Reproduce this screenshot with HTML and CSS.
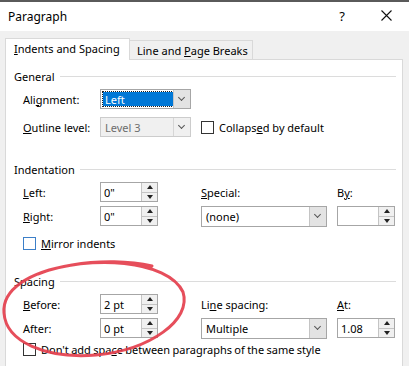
FILE: index.html
```html
<!DOCTYPE html>
<html lang="en">
<head>
    <meta charset="UTF-8">
    <title>Paragraph</title>
    <link rel="stylesheet" href="styles.css">
</head>
<body>
    <div class="window">
        <div class="topline"></div>
        <div class="titlebar">
            <span class="title">Paragraph</span>
            <span class="help">?</span>
            <svg class="close" width="11" height="11" viewBox="0 0 11 11">
                <path d="M0.5 0.5 L10.5 10.5 M10.5 0.5 L0.5 10.5" stroke="#111" stroke-width="1.1" fill="none"/>
            </svg>
        </div>

        <div class="dialog">
            <div class="tabs">
                <div class="tab active"><span><u>I</u>ndents and Spacing</span></div>
                <div class="tab"><span>Line and <u>P</u>age Breaks</span></div>
            </div>

            <div class="panel">
                <div class="group-head"><span>General</span><i></i></div>
                <div class="grid general">
                    <label>Ali<u>g</u>nment:</label>
                    <div class="select">
                        <span class="value"><span class="picked">Left</span></span>
                        <span class="drop"></span>
                    </div>
                    <span></span>
                    <span></span>

                    <label><u>O</u>utline level:</label>
                    <div class="select disabled">
                        <span class="value">Level 3</span>
                        <span class="drop"></span>
                    </div>
                    <span></span>
                    <div class="check"><span class="box"></span><span>Collaps<u>e</u>d by default</span></div>
                </div>

                <div class="group-head indent-head"><span>Indentation</span><i></i></div>
                <div class="grid fields">
                    <label><u>L</u>eft:</label>
                    <div class="spin"><span class="value">0"</span><span class="arrows"><b class="up"></b><b class="down"></b></span></div>
                    <span></span>
                    <label><u>S</u>pecial:</label>
                    <span></span>
                    <label>B<u>y</u>:</label>

                    <label><u>R</u>ight:</label>
                    <div class="spin"><span class="value">0"</span><span class="arrows"><b class="up"></b><b class="down"></b></span></div>
                    <span></span>
                    <div class="select wide">
                        <span class="value">(none)</span>
                        <span class="drop"></span>
                    </div>
                    <span></span>
                    <div class="spin"><span class="value"></span><span class="arrows"><b class="up"></b><b class="down"></b></span></div>
                </div>
                <div class="check mirror"><span class="box blue"></span><span><u>M</u>irror indents</span></div>

                <div class="group-head spacing-head"><span>Spacing</span><i></i></div>
                <div class="grid fields">
                    <label><u>B</u>efore:</label>
                    <div class="spin"><span class="value">2 pt</span><span class="arrows"><b class="up"></b><b class="down"></b></span></div>
                    <span></span>
                    <label>Li<u>n</u>e spacing:</label>
                    <span></span>
                    <label><u>A</u>t:</label>

                    <label>After:</label>
                    <div class="spin"><span class="value">0 pt</span><span class="arrows"><b class="up"></b><b class="down"></b></span></div>
                    <span></span>
                    <div class="select wide">
                        <span class="value">Multiple</span>
                        <span class="drop"></span>
                    </div>
                    <span></span>
                    <div class="spin"><span class="value">1.08</span><span class="arrows"><b class="up"></b><b class="down"></b></span></div>
                </div>
                <div class="check same-style"><span class="box"></span><span>Don't add spa<u>c</u>e between paragraphs of the same style</span></div>
            </div>
        </div>

        <!-- red marker drawn over the dialog -->
        <svg class="marker" width="409" height="366" viewBox="0 0 409 366">
            <path d="M38 274 C 90 254, 168 260, 183 292 C 192 320, 150 350, 96 355 C 46 359, 6 342, 4 313 C 2 290, 28 272, 72 265 C 100 260, 130 261, 152 266"
                  stroke="#e43f4d" stroke-width="3" fill="none" stroke-linecap="round" opacity="0.92"/>
        </svg>
    </div>
</body>
</html>
```

FILE: styles.css
```css
html, body {
    margin: 0;
    height: 100%;
    overflow: hidden;
}

body {
    font-family: "Noto Sans", "Open Sans", sans-serif;
    font-size: 11px;
    color: #000;
    background: #f0f0f0;
}

.window {
    position: relative;
    height: 366px;
    overflow: hidden;
}

.topline {
    height: 2px;
    background: #5a5a5a;
}

.titlebar {
    height: 29px;
    background: #fff;
    display: flex;
    align-items: center;
    padding-left: 8px;
}

.title {
    font-size: 12px;
    flex: 1;
    margin-top: -1px;
}

.help {
    font-size: 13px;
    margin-right: 36px;
    margin-top: -2px;
}

.close {
    margin-right: 17px;
    margin-top: -2px;
}

.dialog {
    padding: 7px 6px 0 5px;
}

.tabs {
    display: flex;
    align-items: flex-end;
    height: 21px;
}

.tab {
    box-sizing: border-box;
    height: 19px;
    width: 123px;
    padding-left: 7px;
    display: flex;
    align-items: center;
    white-space: nowrap;
    background: #f0f0f0;
    border: 1px solid #d9d9d9;
    border-left: none;
    border-bottom: none;
}

.tab.active {
    height: 22px;
    width: 125px;
    padding-left: 8px;
    padding-bottom: 2px;
    background: #fff;
    border-left: 1px solid #d9d9d9;
    margin-bottom: -1px;
    position: relative;
    z-index: 1;
}

.panel {
    background: #fff;
    border: 1px solid #d9d9d9;
    height: 300px;
    padding: 8px 6px 0 8px;
}

.group-head {
    display: flex;
    align-items: center;
    gap: 5px;
    height: 16px;
}

.group-head i {
    flex: 1;
    height: 1px;
    background: #dcdcdc;
}

.grid {
    display: grid;
    margin-left: 9px;
    align-items: center;
}

.general {
    grid-template-columns: 77px 91px 10px auto;
    grid-template-rows: 20px 20px;
    row-gap: 8px;
    margin-top: 5px;
}

.fields {
    grid-template-columns: 77px 58px 43px 126px 10px 58px;
    grid-template-rows: 20px 20px;
    row-gap: 4px;
    margin-top: 5px;
}

.spacing-head + .fields {
    margin-top: 5px;
}

.indent-head {
    margin-top: 24px;
}

.spacing-head {
    margin-top: 23px;
}

label {
    white-space: nowrap;
}

.select {
    box-sizing: border-box;
    height: 20px;
    display: flex;
    border: 1px solid #a6a6a6;
    background: #fff;
}

.select.wide {
    height: 21px;
}

.select .value {
    flex: 1;
    display: flex;
    align-items: center;
    padding-left: 2px;
}

.picked {
    background: #0078d7;
    color: #fff;
    width: 68px;
    height: 14px;
    display: flex;
    align-items: center;
    padding-left: 2px;
    outline: 1px dotted #222;
}

.select.wide .value {
    padding-left: 4px;
}

.drop {
    width: 16px;
    background: #e3e3e3;
    border-left: 1px solid #c4c4c4;
    position: relative;
}

.drop::after {
    content: "";
    position: absolute;
    left: 5px;
    top: 5px;
    width: 4px;
    height: 4px;
    border-right: 1px solid #555;
    border-bottom: 1px solid #555;
    transform: rotate(45deg);
}

.select.disabled {
    background: #f0f0f0;
    border-color: #cccccc;
    color: #6d6d6d;
}

.select.disabled .value {
    padding-left: 4px;
}

.select.disabled .drop {
    background: #f0f0f0;
    border-left-color: #d6d6d6;
}

.spin {
    box-sizing: border-box;
    height: 20px;
    display: flex;
    border: 1px solid #a6a6a6;
    background: #fff;
}

.spin .value {
    flex: 1;
    display: flex;
    align-items: center;
    padding-left: 3px;
}

.arrows {
    width: 15px;
    display: flex;
    flex-direction: column;
    border-left: 1px solid #c4c4c4;
    background: #f0f0f0;
}

.arrows b {
    flex: 1;
    display: flex;
    justify-content: center;
    align-items: center;
}

.arrows b.up {
    border-bottom: 1px solid #c4c4c4;
}

.arrows b::after {
    content: "";
    width: 0;
    height: 0;
    border-left: 3.5px solid transparent;
    border-right: 3.5px solid transparent;
}

.arrows b.up::after {
    border-bottom: 4px solid #222;
}

.arrows b.down::after {
    border-top: 4px solid #222;
}

.check {
    display: flex;
    align-items: center;
    gap: 5px;
    white-space: nowrap;
}

.box {
    box-sizing: border-box;
    width: 13px;
    height: 13px;
    border: 1px solid #333;
    background: #fff;
}

.box.blue {
    border-color: #3c7fc8;
}

.mirror {
    margin: 11px 0 0 9px;
    height: 13px;
}

.same-style {
    margin: 5px 0 0 9px;
    height: 13px;
    word-spacing: -0.5px;
}

.marker {
    position: absolute;
    left: 0;
    top: 0;
    pointer-events: none;
}
```
